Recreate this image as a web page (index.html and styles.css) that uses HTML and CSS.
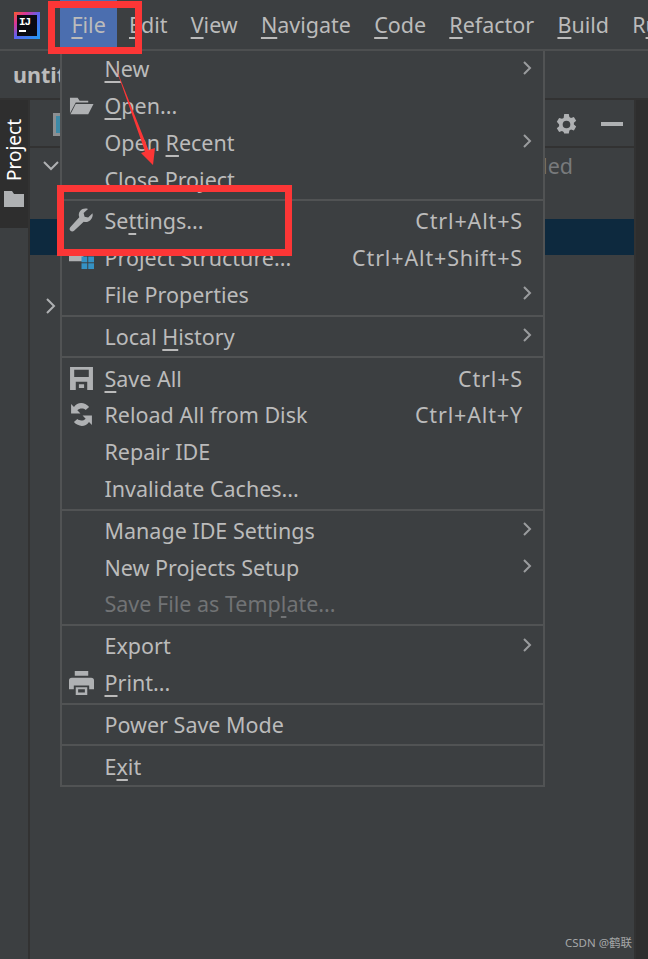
FILE: index.html
```html
<!DOCTYPE html>
<html lang="en">
<head>
<meta charset="utf-8">
<title>IntelliJ IDEA File menu</title>
<link rel="stylesheet" href="styles.css">
</head>
<body>
<div class="app">
  <header class="menubar">
    <div class="logo"><div class="logo-inner"><span class="logo-text">IJ</span><span class="logo-bar"></span></div></div>
    <nav class="menus">
      <span class="menu-title active"><u>F</u>ile</span>
      <span class="menu-title"><u>E</u>dit</span>
      <span class="menu-title"><u>V</u>iew</span>
      <span class="menu-title"><u>N</u>avigate</span>
      <span class="menu-title"><u>C</u>ode</span>
      <span class="menu-title"><u>R</u>efactor</span>
      <span class="menu-title"><u>B</u>uild</span>
      <span class="menu-title">R<u>u</u>n</span>
    </nav>
  </header>
  <div class="navbar"><span class="crumb">untitled</span></div>
  <main class="workspace">
    <aside class="leftbar">
      <div class="tab">
        <span class="tab-label">Project</span>
        <svg class="tab-icon" viewBox="0 0 20 16"><path d="M0 0h8l2 3h10v13H0z"/></svg>
      </div>
    </aside>
    <section class="tool">
      <div class="tool-head">
        <span class="module-icon"></span>
        <span class="head-spacer"></span>
        <svg class="gear" viewBox="0 0 24 24"><path fill-rule="evenodd" d="M9.6 1h4.8l.6 3.1 1.700 1 3-1 2.400 4.100-2.400 2.100v1.800l2.400 2.100-2.400 4.100-3-1-1.700 1-.6 3.100H9.600L9 19.900l-1.700-1-3 1-2.400-4.100 2.400-2.100v-1.800L1.900 9.200l2.400-4.100 3 1 1.700-1zM12 8a4 4 0 1 0 0 8 4 4 0 0 0 0-8z"/></svg>
        <span class="minus"></span>
      </div>
      <div class="tree">
        <div class="tree-row">
          <svg class="tree-arrow" viewBox="0 0 16 16"><path d="M1 4l7 7 7-7"/></svg>
          <span class="tree-path">~\IdeaProjects\untitled</span>
        </div>
        <div class="tree-row"></div>
        <div class="tree-row selected"></div>
        <div class="tree-row"></div>
        <div class="tree-row short">
          <svg class="tree-arrow" viewBox="0 0 16 16"><path d="M4 1l7 7-7 7"/></svg>
        </div>
      </div>
    </section>
    <aside class="rightbar"></aside>
  </main>
</div>

<div class="file-menu">
  <div class="row"><span class="icon-cell"></span><span class="label"><u>N</u>ew</span><span class="arrow"><svg viewBox="0 0 21 16"><path d="M2 2l6 6-6 6"/></svg></span></div>
  <div class="row"><span class="icon-cell"><svg class="icon" viewBox="0 0 26 20"><path d="M1 18V2h8l2 3h9v2H7zM7 8.500h18.500L20 19H1.500z"/></svg></span><span class="label"><u>O</u>pen...</span></div>
  <div class="row"><span class="icon-cell"></span><span class="label">Open <u>R</u>ecent</span><span class="arrow"><svg viewBox="0 0 21 16"><path d="M2 2l6 6-6 6"/></svg></span></div>
  <div class="row"><span class="icon-cell"></span><span class="label">Close Project</span></div>
  <div class="sep"></div>
  <div class="row"><span class="icon-cell"><svg class="icon" viewBox="0 0 26 26"><path d="M24.500 5.500l-4.600 4.400-3.700-.9-1-3.700L19.800 1c-3-1-6.300-.3-8 1.800-1.800 2-2 4.500-1.100 6.700L1.500 19.800c-1.200 1.300-1.100 2.800 0 3.900s2.700 1.100 3.800 0l10-9.500c2.400.9 4.900.4 6.800-1.400 2-1.900 3-4.700 2.400-6.800z"/></svg></span><span class="label">Se<u>t</u>tings...</span><span class="shortcut">Ctrl+Alt+S</span></div>
  <div class="row"><span class="icon-cell"><svg class="icon" viewBox="0 0 26 26"><path d="M0 6h20v5h-5v6H0z"/><rect class="blue" x="13" y="12" width="6" height="6"/><rect class="blue" x="20" y="12" width="6" height="6"/><rect class="blue" x="13" y="19" width="6" height="6"/><rect class="blue" x="20" y="19" width="6" height="6"/></svg></span><span class="label">Project Structure...</span><span class="shortcut">Ctrl+Alt+Shift+S</span></div>
  <div class="row"><span class="icon-cell"></span><span class="label">File Properties</span><span class="arrow"><svg viewBox="0 0 21 16"><path d="M2 2l6 6-6 6"/></svg></span></div>
  <div class="sep"></div>
  <div class="row"><span class="icon-cell"></span><span class="label">Local <u>H</u>istory</span><span class="arrow"><svg viewBox="0 0 21 16"><path d="M2 2l6 6-6 6"/></svg></span></div>
  <div class="sep"></div>
  <div class="row"><span class="icon-cell"><svg class="icon" viewBox="0 0 24 24"><path fill-rule="evenodd" d="M1 1h22v22H1zM5 3.500v7h14v-7zM6.500 15v8h11v-8zM9.500 17.500h5V21h-5z"/></svg></span><span class="label"><u>S</u>ave All</span><span class="shortcut">Ctrl+S</span></div>
  <div class="row"><span class="icon-cell"><svg class="icon" viewBox="0 0 24 24"><path d="M2 2v9h9L8 8c2-2.200 5.800-2.400 8-.4l3.300-2.900C15-.2 8-.2 4.800 4.800zM22 22v-9h-9l3 3c-2 2.200-5.800 2.400-8 .4l-3.300 2.900c4.300 4.900 11.300 4.900 14.500-.1z"/></svg></span><span class="label">Reload All from Disk</span><span class="shortcut">Ctrl+Alt+Y</span></div>
  <div class="row"><span class="icon-cell"></span><span class="label">Repair IDE</span></div>
  <div class="row"><span class="icon-cell"></span><span class="label">Invalidate Caches...</span></div>
  <div class="sep"></div>
  <div class="row"><span class="icon-cell"></span><span class="label">Manage IDE Settings</span><span class="arrow"><svg viewBox="0 0 21 16"><path d="M2 2l6 6-6 6"/></svg></span></div>
  <div class="row"><span class="icon-cell"></span><span class="label">New Projects Setup</span><span class="arrow"><svg viewBox="0 0 21 16"><path d="M2 2l6 6-6 6"/></svg></span></div>
  <div class="row disabled"><span class="icon-cell"></span><span class="label">Save File as Temp<u>l</u>ate...</span></div>
  <div class="sep"></div>
  <div class="row"><span class="icon-cell"></span><span class="label">Export</span><span class="arrow"><svg viewBox="0 0 21 16"><path d="M2 2l6 6-6 6"/></svg></span></div>
  <div class="row"><span class="icon-cell"><svg class="icon" viewBox="0 0 26 26"><path fill-rule="evenodd" d="M6 1h14v5H6zM3 8h20a3 3 0 0 1 3 3v9h-5v-4H5v4H0v-9a3 3 0 0 1 3-3zM7 18h12v8H7zM9.500 20v3.500h7V20z"/></svg></span><span class="label"><u>P</u>rint...</span></div>
  <div class="sep"></div>
  <div class="row"><span class="icon-cell"></span><span class="label">Power Save Mode</span></div>
  <div class="sep"></div>
  <div class="row"><span class="icon-cell"></span><span class="label">E<u>x</u>it</span></div>
</div>

<svg class="annotations" viewBox="0 0 648 959">
  <rect class="mark" x="51.500" y="4.500" width="87" height="46"/>
  <rect class="mark" x="60.500" y="188.500" width="228" height="64"/>
  <path class="pointer" d="M114 63L148.500 150 155 148 153 165 141 153 145 151.500z"/>
</svg>

<div class="watermark">CSDN @鹤联</div>
</body>
</html>
```
FILE: styles.css
```css
* { box-sizing: border-box; }

html, body {
  margin: 0;
  height: 100%;
  overflow: hidden;
}

body {
  position: relative;
  background: #3c3f41;
  color: #bbbbbb;
  font-family: "Noto Sans", "Open Sans", sans-serif;
  font-size: 21.500px;
}

u {
  text-decoration-thickness: 2px;
  text-underline-offset: 4px;
}

.app {
  display: flex;
  flex-direction: column;
  height: 959px;
}

.menubar {
  display: flex;
  flex: none;
  height: 51px;
  padding-left: 14px;
  border-bottom: 2px solid #4d4f50;
}

.logo {
  flex: none;
  width: 26px;
  height: 27px;
  margin-top: 12px;
  padding: 3px;
  background: linear-gradient(135deg, #fb5b2a 0%, #d6359a 25%, #5b63f0 50%, #1e9cf0 100%);
}

.logo-inner {
  position: relative;
  height: 100%;
  background: #0a0a12;
  color: #ffffff;
}

.logo-text {
  display: block;
  padding: 2px 0 0 2px;
  font-family: "Liberation Mono", monospace;
  font-size: 11px;
  font-weight: 700;
  line-height: 10px;
  letter-spacing: -1px;
}

.logo-bar {
  display: block;
  width: 7px;
  height: 2px;
  margin: 3px 0 0 2px;
  background: #ffffff;
}

.menus {
  display: flex;
  margin-left: 20px;
}

.menu-title {
  flex: none;
  height: 49px;
  padding: 0 11.600px;
  line-height: 50px;
}

.menu-title.active {
  padding: 0 11.600px 0 11.400px;
  background: #4b6eaf;
}

.navbar {
  flex: none;
  height: 49px;
  padding-left: 13px;
  border-bottom: 2px solid #323232;
}

.crumb {
  display: block;
  font-weight: 700;
  line-height: 48px;
}

.workspace {
  display: flex;
  flex: 1;
  min-height: 0;
}

.leftbar {
  flex: none;
  width: 30px;
  border-right: 2px solid #323232;
}

.tab {
  display: flex;
  flex-direction: column;
  align-items: center;
  height: 128px;
  padding-top: 19px;
  background: #2e2e2e;
}

.tab-label {
  color: #ffffff;
  font-size: 19px;
  line-height: 26px;
  writing-mode: vertical-rl;
  transform: rotate(180deg);
}

.tab-icon {
  width: 20px;
  height: 16px;
  margin-top: 10px;
  fill: #afb1b3;
}

.tool {
  display: flex;
  flex: 1;
  flex-direction: column;
  min-width: 0;
}

.tool-head {
  display: flex;
  align-items: center;
  flex: none;
  height: 48px;
  padding: 2px 11px 0 23px;
  border-bottom: 2px solid #323232;
}

.module-icon {
  width: 14px;
  height: 23px;
  border: 3px solid #8c8f91;
  background: #3d89a6;
}

.head-spacer {
  flex: 1;
}

.gear {
  width: 23px;
  height: 23px;
  fill: #afb1b3;
}

.minus {
  width: 22px;
  height: 4px;
  margin-left: 23px;
  background: #afb1b3;
}

.tree-row {
  display: flex;
  align-items: center;
  justify-content: space-between;
  height: 35.500px;
  padding: 0 61px 0 13px;
}

.tree-row.short {
  height: 32px;
}

.tree-row.selected {
  background: #0d293e;
}

.tree-arrow {
  width: 16px;
  height: 16px;
  fill: none;
  stroke: #afb1b3;
  stroke-width: 2;
}

.tree-path {
  color: #787a7c;
}

.rightbar {
  flex: none;
  width: 14px;
  border-left: 2px solid #323232;
  background: #2e2e2e;
}

.file-menu {
  position: absolute;
  top: 51px;
  left: 60px;
  width: 485px;
  background: #3c3f41;
  border: 2px solid #515354;
  border-top: 0;
}

.row {
  display: flex;
  align-items: center;
  height: 36.750px;
  padding-bottom: 1px;
  white-space: nowrap;
}

.row.disabled {
  color: #717375;
}

.sep {
  height: 2px;
  margin: 1.300px 0 1.800px;
  background: #515354;
}

.icon-cell {
  display: flex;
  align-items: center;
  justify-content: center;
  flex: none;
  width: 42.500px;
  height: 100%;
  padding-right: 4px;
}

.icon {
  flex: none;
  width: 25px;
  height: 25px;
  fill: #afb1b3;
}

.blue {
  fill: #3592c4;
}

.label {
  flex: 1;
}

.shortcut {
  flex: none;
  padding-right: 20px;
  letter-spacing: .85px;
}

.arrow {
  display: flex;
  flex: none;
  width: 21px;
  margin-top: -2px;
}

.arrow svg {
  width: 21px;
  height: 16px;
  fill: none;
  stroke: #9a9c9e;
  stroke-width: 2;
}

.annotations {
  position: absolute;
  top: 0;
  left: 0;
  width: 648px;
  height: 959px;
  pointer-events: none;
}

.mark {
  fill: none;
  stroke: #fc3636;
  stroke-width: 7;
}

.pointer {
  fill: #fc3636;
}

.watermark {
  position: absolute;
  top: 935px;
  right: 16px;
  color: #a6a8a9;
  font-size: 11.500px;
  line-height: 16px;
  font-family: "Noto Sans", "Noto Sans CJK SC", sans-serif;
}
```
